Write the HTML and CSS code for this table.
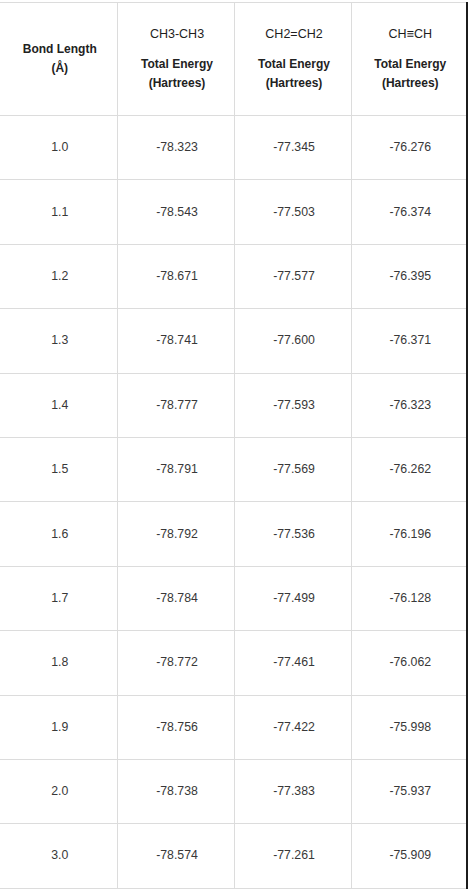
FILE: index.html
```html
<!DOCTYPE html>
<html>
<head>
<meta charset="utf-8">
<link rel="stylesheet" href="styles.css">
</head>
<body>
<div class="frame">
<table class="energy">
<colgroup><col class="c1"><col class="c2"><col class="c3"><col class="c4"></colgroup>
<thead>
<tr class="head">
<th><p class="unit">Bond Length<br>(Å)</p></th>
<th><p class="formula">CH3-CH3</p><p class="unit">Total Energy<br>(Hartrees)</p></th>
<th><p class="formula">CH2=CH2</p><p class="unit">Total Energy<br>(Hartrees)</p></th>
<th><p class="formula">CH≡CH</p><p class="unit">Total Energy<br>(Hartrees)</p></th>
</tr>
</thead>
<tbody>
<tr><td>1.0</td><td>-78.323</td><td>-77.345</td><td>-76.276</td></tr>
<tr><td>1.1</td><td>-78.543</td><td>-77.503</td><td>-76.374</td></tr>
<tr><td>1.2</td><td>-78.671</td><td>-77.577</td><td>-76.395</td></tr>
<tr><td>1.3</td><td>-78.741</td><td>-77.600</td><td>-76.371</td></tr>
<tr><td>1.4</td><td>-78.777</td><td>-77.593</td><td>-76.323</td></tr>
<tr><td>1.5</td><td>-78.791</td><td>-77.569</td><td>-76.262</td></tr>
<tr><td>1.6</td><td>-78.792</td><td>-77.536</td><td>-76.196</td></tr>
<tr><td>1.7</td><td>-78.784</td><td>-77.499</td><td>-76.128</td></tr>
<tr><td>1.8</td><td>-78.772</td><td>-77.461</td><td>-76.062</td></tr>
<tr><td>1.9</td><td>-78.756</td><td>-77.422</td><td>-75.998</td></tr>
<tr><td>2.0</td><td>-78.738</td><td>-77.383</td><td>-75.937</td></tr>
<tr><td>3.0</td><td>-78.574</td><td>-77.261</td><td>-75.909</td></tr>
</tbody>
</table>
</div>
</body>
</html>
```
FILE: styles.css
```css
html, body {
  margin: 0;
  padding: 0;
  background: #fff;
}
body {
  font-family: "Liberation Sans", Arial, sans-serif;
  font-size: 12px;
  color: #333;
}
.frame {
  margin-top: 2px;
  width: 466px;
  border-right: 2px solid #1c1c1c;
}
.energy {
  width: 466px;
  border-collapse: collapse;
  table-layout: fixed;
}
.c1, .c2, .c3 { width: 117px; }
.c4 { width: 115px; }
.energy th, .energy td {
  border-top: 1px solid #dcdcdc;
  border-bottom: 1px solid #dcdcdc;
  border-left: 1px solid #dcdcdc;
  text-align: center;
  vertical-align: middle;
  padding: 0 0 0 3px;
}
.energy th:first-child, .energy td:first-child {
  border-left: none;
}
.head {
  height: 113px;
}
.energy tbody tr {
  height: 64.4px;
}
.energy th {
  color: #222;
  line-height: 19px;
}
.formula {
  margin: 0 0 11px;
  font-weight: normal;
  font-size: 12.5px;
  color: #1e1e1e;
}
.unit {
  margin: 0;
  font-weight: bold;
}
.energy td {
  line-height: 19px;
  font-size: 12.3px;
  color: #383838;
}
```
